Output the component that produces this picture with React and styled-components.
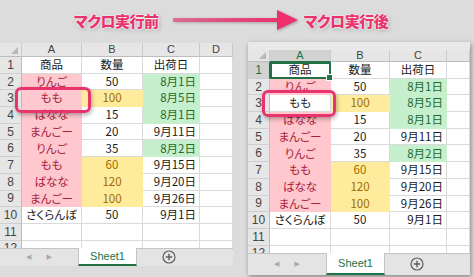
import styled, { createGlobalStyle } from 'styled-components';

const GlobalStyle = createGlobalStyle`
    html, body {
        margin: 0;
        padding: 0;
        background: #dcdcdc;
    }
`;

const PINK = { bg: '#ffc7ce', fg: '#a8203a' };
const YELLOW = { bg: '#ffeb9c', fg: '#a06a00' };
const GREEN = { bg: '#c6efce', fg: '#1f6b2c' };
const FILLS = { pink: PINK, yellow: YELLOW, green: GREEN };

const rows = [
    ['商品', '数量', '出荷日'],
    ['りんご', '50', '8月1日'],
    ['もも', '100', '8月5日'],
    ['ばなな', '15', '8月1日'],
    ['まんごー', '20', '9月11日'],
    ['りんご', '35', '8月2日'],
    ['もも', '60', '9月15日'],
    ['ばなな', '120', '9月20日'],
    ['まんごー', '100', '9月26日'],
    ['さくらんぼ', '50', '9月1日'],
];

const yellowRows = [3, 7, 8, 9];
const greenRows = [2, 3, 4, 6];

function fillFor(col, rowNo, after) {
    if (col === 0 && rowNo >= 2 && rowNo <= 9) {
        if (after && rowNo === 3) return null;
        return 'pink';
    }
    if (col === 1 && yellowRows.includes(rowNo)) return 'yellow';
    if (col === 2 && greenRows.includes(rowNo)) return 'green';
    return null;
}

export default function App() {
    return (
        <Page>
            <GlobalStyle />
            <TitleRow>
                <Title>マクロ実行前</Title>
                <Arrow />
                <Title>マクロ実行後</Title>
            </TitleRow>
            <SheetsRow>
                <Sheet
                    cols="22px 60px 61px 57px 33px"
                    headerH={14}
                    tabH={18}
                    topPad={0}
                    offset={1}
                    letters={['A', 'B', 'C', 'D']}
                    mark={{ left: 15, top: 44, width: 76, height: 26 }}
                />
                <Sheet
                    after
                    cols="22px 61px 59px 57px 23px"
                    headerH={12}
                    tabH={22}
                    topPad={8}
                    offset={0}
                    letters={['A', 'B', 'C', '']}
                    mark={{ left: 14, top: 48, width: 74, height: 27 }}
                />
            </SheetsRow>
        </Page>
    );
}

function Arrow() {
    return (
        <ArrowSvg width="125" height="24" viewBox="0 0 125 24">
            <defs>
                <linearGradient id="shaft" x1="0" x2="1" y1="0" y2="0">
                    <stop offset="0" stopColor="#e8336e" stopOpacity="0.6" />
                    <stop offset="1" stopColor="#ee2f6c" />
                </linearGradient>
            </defs>
            <rect x="0" y="10" width="110" height="4" fill="url(#shaft)" />
            <polygon points="104,2 125,12 104,22" fill="#ee2f6c" />
        </ArrowSvg>
    );
}

function Sheet({ after, cols, headerH, tabH, topPad, offset, letters, mark }) {
    const rowH = 16.7;
    const gridH = headerH + rowH * 11 + 7;

    return (
        <Panel $after={after} $pad={topPad} $offset={offset}>
            <Grid $cols={cols} $headerH={headerH} $rowH={rowH} style={{ height: gridH }}>
                <Corner>
                    <CornerMark />
                </Corner>
                {letters.map((l, i) => (
                    <ColHead key={l + i} $sel={after && i === 0}>{l}</ColHead>
                ))}

                {Array.from({ length: 12 }).map((_, r) => {
                    const rowNo = r + 1;
                    const data = rows[r] || ['', '', ''];
                    return [
                        <RowHead key={'h' + rowNo} $sel={after && rowNo === 1}>{rowNo}</RowHead>,
                        ...data.map((txt, c) => (
                            <Cell
                                key={rowNo + '-' + c}
                                $fill={fillFor(c, rowNo, after)}
                                $align={c === 2 && rowNo > 1 ? 'flex-end' : 'center'}
                                $active={after && rowNo === 1 && c === 0}
                            >
                                {txt}
                                {after && rowNo === 1 && c === 0 && <FillHandle />}
                            </Cell>
                        )),
                        <Cell key={rowNo + '-d'} />,
                    ];
                })}
            </Grid>
            <TabBar $h={tabH}>
                <NavArrows>
                    <span>◀</span>
                    <span>▶</span>
                </NavArrows>
                <Tab>Sheet1</Tab>
                <AddButton>
                    <svg width="14" height="14" viewBox="0 0 14 14">
                        <circle cx="7" cy="7" r="6" fill="none" stroke="#5f5f5f" strokeWidth="1.2" />
                        <path d="M7 3.8v6.4M3.8 7h6.4" stroke="#5f5f5f" strokeWidth="1.4" />
                    </svg>
                </AddButton>
            </TabBar>
            <Marker style={mark} />
        </Panel>
    );
}

const Page = styled.div`
    width: 474px;
    height: 277px;
    overflow: hidden;
    background: #dcdcdc;
    display: flex;
    flex-direction: column;
    font-family: "Noto Sans CJK JP", "Liberation Sans", sans-serif;
`;

const TitleRow = styled.div`
    height: 42px;
    display: flex;
    align-items: center;
    padding-left: 74px;
    gap: 6px;
    box-sizing: border-box;
    padding-bottom: 2px;
`;

const Title = styled.div`
    font-family: "Noto Sans CJK JP", sans-serif;
    font-weight: 900;
    font-size: 15px;
    color: #e8336e;
    letter-spacing: -0.5px;
    font-feature-settings: "palt";
    text-shadow: 0 0 1px #fff, 0 0 2px #fff, 0 0 3px #fff, 1px 1px 4px rgba(0, 0, 0, 0.35);

    &:first-child {
        margin-right: 8px;
    }
`;

const ArrowSvg = styled.svg`
    display: block;
    filter: drop-shadow(1px 1px 1.5px rgba(0, 0, 0, 0.3));
`;

const SheetsRow = styled.div`
    display: flex;
    align-items: flex-start;
    gap: 15px;
`;

const Panel = styled.div`
    position: relative;
    margin-top: ${p => p.$offset}px;
    padding-top: ${p => p.$pad}px;
    background: ${p => (p.$after ? '#e9e9e9' : 'transparent')};
    box-shadow: ${p => (p.$after ? '1px 2px 5px rgba(0, 0, 0, 0.4)' : 'none')};
    display: flex;
    flex-direction: column;
`;

const Grid = styled.div`
    display: grid;
    grid-template-columns: ${p => p.$cols};
    grid-template-rows: ${p => p.$headerH}px repeat(12, ${p => p.$rowH}px);
    overflow: hidden;
    background: #fff;
    font-size: 11.5px;
    font-feature-settings: "palt";
    color: #222;
`;

const Corner = styled.div`
    position: relative;
    background: #e6e6e6;
    border-right: 1px solid #cacaca;
    border-bottom: 1px solid #bdbdbd;
`;

const CornerMark = styled.div`
    position: absolute;
    right: 3px;
    bottom: 2px;
    width: 0;
    height: 0;
    border-left: 7px solid transparent;
    border-bottom: 7px solid #b8b8b8;
`;

const ColHead = styled.div`
    display: flex;
    align-items: center;
    justify-content: center;
    background: ${p => (p.$sel ? '#d2d2d2' : '#e6e6e6')};
    color: ${p => (p.$sel ? '#217346' : '#444')};
    border-right: 1px solid #cacaca;
    border-bottom: 1px solid ${p => (p.$sel ? '#217346' : '#bdbdbd')};
    font-family: "Liberation Sans", sans-serif;
    font-size: 11px;
    line-height: 1;
`;

const RowHead = styled.div`
    display: flex;
    align-items: center;
    justify-content: center;
    background: ${p => (p.$sel ? '#d2d2d2' : '#e6e6e6')};
    color: ${p => (p.$sel ? '#217346' : '#444')};
    border-right: 1px solid ${p => (p.$sel ? '#217346' : '#bdbdbd')};
    border-bottom: 1px solid #cfcfcf;
    font-family: "Liberation Sans", sans-serif;
    font-size: 12px;
    line-height: 1;
`;

const Cell = styled.div`
    position: relative;
    box-sizing: border-box;
    display: flex;
    align-items: center;
    justify-content: ${p => p.$align || 'center'};
    padding: 0 3px;
    white-space: nowrap;
    line-height: 1;
    background: ${p => (p.$fill ? FILLS[p.$fill].bg : '#fff')};
    color: ${p => (p.$fill ? FILLS[p.$fill].fg : '#1a1a1a')};
    border-right: 1px solid ${p => (p.$fill ? FILLS[p.$fill].bg : '#dadada')};
    border-bottom: 1px solid ${p => (p.$fill ? FILLS[p.$fill].bg : '#dadada')};
    outline: ${p => (p.$active ? '2px solid #217346' : 'none')};
    outline-offset: -2px;
`;

const FillHandle = styled.span`
    position: absolute;
    right: -3px;
    bottom: -3px;
    width: 5px;
    height: 5px;
    background: #217346;
    border: 1px solid #fff;
    z-index: 2;
`;

const TabBar = styled.div`
    height: ${p => p.$h}px;
    display: flex;
    align-items: stretch;
    background: #e4e4e4;
    border-top: 1px solid #c4c4c4;
    box-sizing: border-box;
`;

const NavArrows = styled.div`
    width: 78px;
    display: flex;
    justify-content: center;
    align-items: center;
    gap: 15px;
    color: #a9a9a9;
    font-size: 7px;
    font-family: "DejaVu Sans", sans-serif;
`;

const Tab = styled.div`
    width: 57px;
    margin-top: -1px;
    display: flex;
    align-items: center;
    justify-content: center;
    background: #fff;
    border-bottom: 2px solid #217346;
    border-left: 1px solid #c4c4c4;
    border-right: 1px solid #c4c4c4;
    color: #217346;
    font-family: "Liberation Sans", sans-serif;
    font-size: 11px;
`;

const AddButton = styled.div`
    margin-left: 25px;
    display: flex;
    align-items: center;
`;

const Marker = styled.div`
    position: absolute;
    box-sizing: border-box;
    border: 3px solid #e8336e;
    border-radius: 6px;
    box-shadow: 1px 2px 4px rgba(0, 0, 0, 0.3);
    pointer-events: none;
`;
